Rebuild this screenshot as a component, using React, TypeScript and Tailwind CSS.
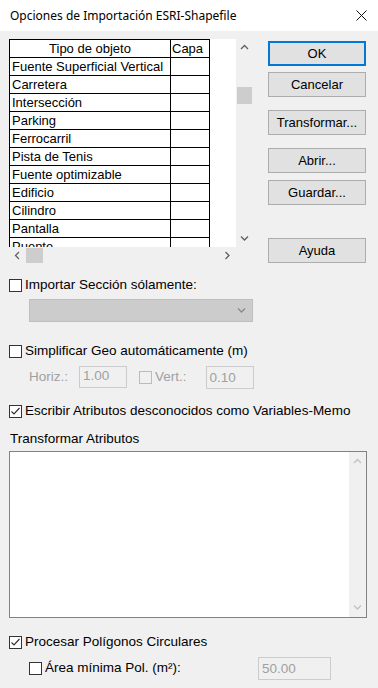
import React from "react";

const rows = [
  "Fuente Superficial Vertical",
  "Carretera",
  "Intersección",
  "Parking",
  "Ferrocarril",
  "Pista de Tenis",
  "Fuente optimizable",
  "Edificio",
  "Cilindro",
  "Pantalla",
  "Puente",
];

function Chevron({ dir, color = "#606060" }: { dir: "up" | "down" | "left" | "right"; color?: string }) {
  const d =
    dir === "up"
      ? "M1 5 L4.5 1.5 L8 5"
      : dir === "down"
      ? "M1 1.5 L4.5 5 L8 1.5"
      : dir === "left"
      ? "M5 1 L1.5 4.5 L5 8"
      : "M1.5 1 L5 4.5 L1.5 8";
  const w = dir === "up" || dir === "down" ? 9 : 7;
  const h = dir === "up" || dir === "down" ? 7 : 9;
  return (
    <svg width={w} height={h} viewBox={`0 0 ${w} ${h}`}>
      <path d={d} fill="none" stroke={color} strokeWidth="1.3" />
    </svg>
  );
}

function Checkbox({ checked = false, disabled = false }: { checked?: boolean; disabled?: boolean }) {
  return (
    <div
      className={`w-[13px] h-[13px] shrink-0 border ${
        disabled ? "border-[#bcbcbc] bg-[#f0f0f0]" : "border-[#333333] bg-white"
      } flex items-center justify-center`}
    >
      {checked && (
        <svg width="11" height="11" viewBox="0 0 11 11">
          <path d="M1.5 5.5 L4 8 L9.5 2" fill="none" stroke="#333333" strokeWidth="1.2" />
        </svg>
      )}
    </div>
  );
}

function Btn({ children, primary = false }: { children: React.ReactNode; primary?: boolean }) {
  return (
    <div
      className={`w-[98px] h-[25px] flex items-center justify-center bg-[#e1e1e1] text-black text-[13px] ${
        primary ? "border-2 border-[#0078d7]" : "border border-[#adadad]"
      }`}
    >
      {children}
    </div>
  );
}

export default function App() {
  return (
    <div
      className="w-[378px] h-[688px] bg-[#f0f0f0] overflow-hidden text-[13px] text-black"
      style={{ fontFamily: '"Liberation Sans", Arial, sans-serif' }}
    >
      {/* Title bar */}
      <div className="h-[31px] bg-white flex items-center justify-between pl-[10px] pr-[11px]">
        <span className="text-[12px]" style={{ fontFamily: '"Noto Sans", "Open Sans", sans-serif' }}>
          Opciones de Importación ESRI-Shapefile
        </span>
        <svg width="11" height="11" viewBox="0 0 11 11">
          <path d="M0.5 0.5 L10.5 10.5 M10.5 0.5 L0.5 10.5" stroke="#111" strokeWidth="1" />
        </svg>
      </div>

      {/* Top area */}
      <div className="flex mt-[8px] ml-[9px]">
        {/* List box */}
        <div className="w-[243px] h-[224px] flex flex-col">
          <div className="flex h-[208px]">
            <div className="w-[227px] h-[208px] bg-white overflow-hidden">
              <div className="border-t border-black w-[201px]">
                <div className="flex h-[18px] border-b border-black">
                  <div className="w-[162px] border-l border-r border-black text-center leading-[17px]">Tipo de objeto</div>
                  <div className="w-[39px] border-r border-black pl-[1px] leading-[17px]">Capa</div>
                </div>
                {rows.map((r) => (
                  <div key={r} className="flex h-[18px] border-b border-black">
                    <div className="w-[162px] border-l border-r border-black pl-[2px] leading-[17px] whitespace-nowrap overflow-hidden">
                      {r}
                    </div>
                    <div className="w-[39px] border-r border-black"></div>
                  </div>
                ))}
              </div>
            </div>
            {/* vertical scrollbar */}
            <div className="w-[16px] h-[208px] flex flex-col items-center">
              <div className="h-[17px] flex items-center justify-center">
                <Chevron dir="up" />
              </div>
              <div className="mt-[31px] w-[15px] h-[17px] bg-[#cdcdcd]"></div>
              <div className="flex-1"></div>
              <div className="h-[17px] flex items-center justify-center">
                <Chevron dir="down" />
              </div>
            </div>
          </div>
          {/* horizontal scrollbar */}
          <div className="flex h-[16px] w-[227px] items-center">
            <div className="w-[17px] flex items-center justify-center">
              <Chevron dir="left" />
            </div>
            <div className="w-[17px] h-[15px] bg-[#cdcdcd]"></div>
            <div className="flex-1"></div>
            <div className="w-[17px] flex items-center justify-center">
              <Chevron dir="right" />
            </div>
          </div>
        </div>

        {/* Buttons */}
        <div className="ml-[16px] mt-[2px] flex flex-col">
          <Btn primary>OK</Btn>
          <div className="mt-[6px]">
            <Btn>Cancelar</Btn>
          </div>
          <div className="mt-[13px]">
            <Btn>Transformar...</Btn>
          </div>
          <div className="mt-[13px]">
            <Btn>Abrir...</Btn>
          </div>
          <div className="mt-[7px]">
            <Btn>Guardar...</Btn>
          </div>
          <div className="mt-[33px]">
            <Btn>Ayuda</Btn>
          </div>
        </div>
      </div>

      {/* Options */}
      <div className="ml-[9px] flex flex-col text-[13.5px]">
        <div className="mt-[16px] h-[13px] flex items-center gap-[3px]">
          <Checkbox />
          <span>Importar Sección sólamente:</span>
        </div>
        <div className="mt-[7px] ml-[20px] w-[224px] h-[23px] bg-[#cccccc] border border-[#bfbfbf] flex items-center justify-end pr-[6px]">
          <Chevron dir="down" color="#8a8a8a" />
        </div>

        <div className="mt-[23px] h-[13px] flex items-center gap-[3px]">
          <Checkbox />
          <span>Simplificar Geo automáticamente (m)</span>
        </div>
        <div className="mt-[8px] h-[22px] flex items-center text-[#a0a0a0]">
          <span className="ml-[20px] w-[50px]">Horiz.:</span>
          <div className="w-[48px] h-[22px] border border-[#cccccc] pl-[3px] leading-[18px]">1.00</div>
          <div className="ml-[12px] flex items-center gap-[3px]">
            <Checkbox disabled />
            <span>Vert.:</span>
          </div>
          <div className="ml-[19px] w-[48px] h-[23px] border border-[#cccccc] pl-[3px] leading-[21px]">0.10</div>
        </div>

        <div className="mt-[17px] h-[13px] flex items-center gap-[3px]">
          <Checkbox checked />
          <span>Escribir Atributos desconocidos como Variables-Memo</span>
        </div>

        <div className="mt-[13px] h-[16px] leading-[16px] ml-[1px]">Transformar Atributos</div>
        <div className="mt-[4px] w-[358px] h-[167px] border border-[#828282] bg-white flex justify-end">
          <div className="w-[17px] h-full bg-[#f0f0f0] flex flex-col items-center justify-between py-[6px]">
            <Chevron dir="up" color="#c2c2c2" />
            <Chevron dir="down" color="#c2c2c2" />
          </div>
        </div>

        <div className="mt-[18px] h-[13px] flex items-center gap-[3px]">
          <Checkbox checked />
          <span>Procesar Polígonos Circulares</span>
        </div>
        <div className="mt-[8px] h-[23px] flex items-center">
          <div className="ml-[20px] flex items-center gap-[3px]">
            <Checkbox />
            <span>Área mínima Pol. (m²):</span>
          </div>
          <div className="ml-auto mr-[47px] w-[73px] h-[23px] border border-[#cccccc] pl-[3px] leading-[21px] text-[#a0a0a0]">
            50.00
          </div>
        </div>
      </div>
    </div>
  );
}
